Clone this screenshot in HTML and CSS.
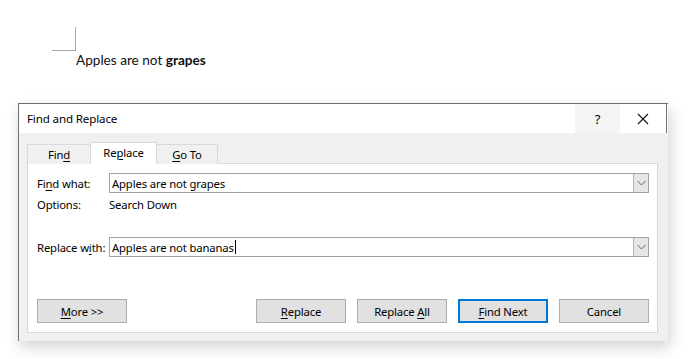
FILE: index.html
```html
<html>
<head>
    <link rel="stylesheet" href="styles.css">
</head>
<body>
  <div class="doc">
    <div class="corner"></div>
    <p class="doc-text">Apples are not <b>grapes</b></p>
  </div>

  <div class="dialog">
    <div class="titlebar">
      <span class="title">Find and Replace</span>
      <div class="cap-btn help">?</div>
      <div class="cap-btn close">
        <svg width="12" height="12" viewBox="0 0 12 12">
          <path d="M1 1 L11 11 M11 1 L1 11" stroke="#111" stroke-width="1.1" fill="none"/>
        </svg>
      </div>
    </div>

    <div class="dialog-body">
      <div class="tabs">
        <div class="tab tab-find"><span>Fin<u>d</u></span></div>
        <div class="tab tab-replace active"><span>Re<u>p</u>lace</span></div>
        <div class="tab tab-goto"><span><u>G</u>o To</span></div>
      </div>

      <div class="panel">
        <div class="field-row">
          <span class="label">Fi<u>n</u>d what:</span>
          <div class="combo">
            <span class="combo-text">Apples are not grapes</span>
            <span class="combo-btn">
              <svg width="9" height="6" viewBox="0 0 9 6"><path d="M0.5 1 L4.5 5 L8.5 1" stroke="#666" stroke-width="1" fill="none"/></svg>
            </span>
          </div>
        </div>

        <div class="field-row options-row">
          <span class="label">Options:</span>
          <span>Search Down</span>
        </div>

        <div class="field-row replace-row">
          <span class="label">Replace w<u>i</u>th:</span>
          <div class="combo">
            <span class="combo-text"><span>Apples are not bananas</span><span class="caret"></span></span>
            <span class="combo-btn">
              <svg width="9" height="6" viewBox="0 0 9 6"><path d="M0.5 1 L4.5 5 L8.5 1" stroke="#666" stroke-width="1" fill="none"/></svg>
            </span>
          </div>
        </div>

        <div class="button-row">
          <div class="btn"><span><u>M</u>ore &gt;&gt;</span></div>
          <div class="btn-group">
            <div class="btn"><span><u>R</u>eplace</span></div>
            <div class="btn"><span>Replace <u>A</u>ll</span></div>
            <div class="btn default"><span><u>F</u>ind Next</span></div>
            <div class="btn"><span>Cancel</span></div>
          </div>
        </div>
      </div>
    </div>
  </div>
</body>
</html>
```

FILE: styles.css
```css
html, body {
  margin: 0;
  padding: 0;
  background: #fff;
}
body {
  font-family: "Noto Sans", "Open Sans", sans-serif;
  font-size: 11.3px;
  letter-spacing: -0.15px;
  color: #000;
  width: 698px;
  height: 359px;
  overflow: hidden;
  white-space: nowrap;
}

u {
  text-decoration-thickness: 1px;
  text-underline-offset: 2px;
}

/* document behind the dialog */
.doc {
  padding: 27px 0 0 52px;
}
.doc .corner {
  width: 23px;
  height: 23px;
  border-right: 1px solid #a8a8a8;
  border-bottom: 1px solid #a8a8a8;
}
.doc-text {
  margin: 0 0 0 24px;
  font-family: "Lato", "Liberation Sans", sans-serif;
  font-size: 13.6px;
  letter-spacing: 0;
  line-height: 18px;
  color: #111;
}

/* dialog */
.dialog {
  margin: 34px 0 0 18px;
  width: 650px;
  box-sizing: border-box;
  border-top: 1px solid #6f6f6f;
  border-left: 1px solid #6f6f6f;
  box-shadow: 2px 6px 14px rgba(0,0,0,.18);
}

.titlebar {
  display: flex;
  align-items: center;
  height: 29px;
  margin-right: 1px;
  border-right: 1px solid #6f6f6f;
  background: #fff;
}
.titlebar .title {
  flex: 1;
  padding-left: 8px;
  font-size: 11.6px;
}
.cap-btn {
  height: 29px;
  display: flex;
  align-items: center;
  justify-content: center;
}
.cap-btn.help {
  width: 45px;
  background: #f4f4f4;
  font-size: 13px;
}
.cap-btn.close {
  width: 46px;
}

.dialog-body {
  background: #f0f0f0;
  padding: 9px 10px 8px 8px;
}

.tabs {
  display: flex;
  align-items: flex-end;
  margin-bottom: -1px;
}
.tab {
  box-sizing: border-box;
  height: 20px;
  border: 1px solid #d9d9d9;
  border-bottom: none;
  background: #f0f0f0;
  display: flex;
  align-items: center;
  justify-content: center;
  padding-bottom: 1px;
}
.tab-find { width: 63px; border-right: none; }
.tab-replace { width: 67px; }
.tab-goto { width: 61px; border-left: none; }
.tab.active {
  height: 22px;
  background: #fff;
  position: relative;
  z-index: 1;
  padding-bottom: 3px;
}

.panel {
  background: #fff;
  border: 1px solid #d9d9d9;
  padding: 9px 8px 9px 9px;
}

.field-row {
  display: flex;
  align-items: center;
  height: 20px;
}
.field-row .label {
  width: 72px;
  flex: none;
}
.options-row {
  height: 22px;
}
.replace-row {
  margin-top: 22px;
}

.combo {
  flex: 1;
  height: 20px;
  box-sizing: border-box;
  border: 1px solid #a2a2a2;
  display: flex;
  align-items: center;
}
.combo-text {
  flex: 1;
  padding-left: 2px;
  display: flex;
  align-items: center;
}
.caret {
  display: inline-block;
  width: 1px;
  height: 14px;
  background: #000;
  margin-left: 1px;
}
.combo-btn {
  width: 15px;
  height: 18px;
  box-sizing: border-box;
  border-left: 1px solid #b4b4b4;
  background: #e6e6e6;
  display: flex;
  align-items: center;
  justify-content: center;
}

.button-row {
  display: flex;
  margin-top: 42px;
}
.btn-group {
  margin-left: auto;
  display: flex;
  gap: 11px;
}
.btn {
  width: 90px;
  height: 24px;
  box-sizing: border-box;
  border: 1px solid #adadad;
  background: #e1e1e1;
  display: flex;
  align-items: center;
  justify-content: center;
}
.btn.default {
  border-color: #0078d7;
  box-shadow: inset 0 0 0 1px #0078d7;
}
```
